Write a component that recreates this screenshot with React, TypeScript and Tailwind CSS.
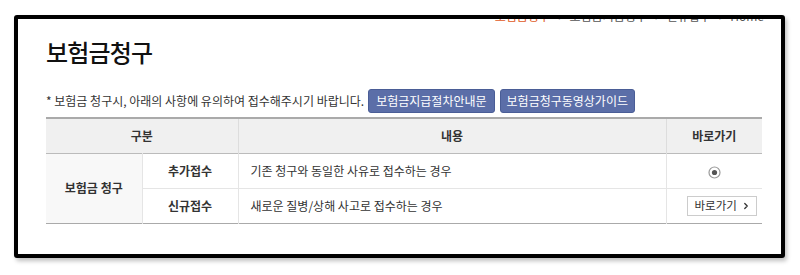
import { ChevronRight } from 'lucide-react';

const font = { fontFamily: '"Noto Sans CJK KR", "Noto Sans", sans-serif' };

const crumbs = [
  { label: '보험금청구', active: true },
  { label: '보험금지급청구', active: false },
  { label: '신규접수', active: false },
  { label: 'Home', active: false },
];

const RadioIcon = () => (
  <svg width="13" height="13" viewBox="0 0 13 13">
    <circle cx="6.5" cy="6.5" r="5.5" fill="#fff" stroke="#9a9a9a" strokeWidth="1.2" />
    <circle cx="6.5" cy="6.5" r="2.6" fill="#555" />
  </svg>
);

export default function App() {
  return (
    <div className="h-[275px] w-[800px] bg-white pt-[15px] pl-[14px]" style={font}>
      <div className="h-[243px] w-[771px] overflow-hidden rounded-[3px] border-4 border-black bg-white shadow-[2px_3px_4px_rgba(0,0,0,0.25)]">
        <div className="-mt-[9px] flex justify-end gap-[8px] pr-[17px] text-[12px] leading-[12px] text-[#555]">
          {crumbs.map((c, i) => (
            <span key={c.label} className={c.active ? 'text-[#e0581c]' : ''}>
              {i > 0 && <span className="mr-[8px] text-[#999]">›</span>}
              {c.label}
            </span>
          ))}
        </div>

        <div className="pl-[28px] pr-[18px]">
          <h1 className="mt-[14px] text-[24px] leading-[32px] font-medium tracking-[-0.8px] text-[#111]">
            보험금청구
          </h1>

          <div className="mt-[21px] flex items-center">
            <p className="text-[12px] text-[#333]">
              * 보험금 청구시, 아래의 사항에 유의하여 접수해주시기 바랍니다.
            </p>
            <button className="ml-[4px] h-[24px] rounded-[3px] border border-[#4a5d96] bg-[#5b6ea8] px-[7px] text-[12px] text-white">
              보험금지급절차안내문
            </button>
            <button className="ml-[5px] h-[24px] rounded-[3px] border border-[#4a5d96] bg-[#5b6ea8] px-[6px] text-[12px] text-white">
              보험금청구동영상가이드
            </button>
          </div>

          <table className="mt-[4px] w-[716px] border-collapse text-[12px] text-[#333]">
            <thead>
              <tr className="h-[35px] border-t-2 border-b border-t-[#aaa] border-b-[#bbb] bg-[#f0f0f0]">
                <th colSpan={2} className="w-[192px] border-r border-[#ddd] font-semibold">
                  구분
                </th>
                <th className="border-r border-[#ddd] font-semibold">내용</th>
                <th className="w-[96px] font-semibold">바로가기</th>
              </tr>
            </thead>
            <tbody>
              <tr className="h-[35px] border-b border-[#e5e5e5]">
                <td rowSpan={2} className="w-[96px] border-r border-[#e5e5e5] bg-[#f8f8f8] text-center font-semibold">
                  보험금 청구
                </td>
                <td className="w-[96px] border-r border-[#e5e5e5] text-center font-semibold">추가접수</td>
                <td className="border-r border-[#e5e5e5] pl-[12px]">기존 청구와 동일한 사유로 접수하는 경우</td>
                <td className="text-center">
                  <span className="inline-flex align-middle">
                    <RadioIcon />
                  </span>
                </td>
              </tr>
              <tr className="h-[35px] border-b border-[#aaa]">
                <td className="border-r border-[#e5e5e5] text-center font-semibold">신규접수</td>
                <td className="border-r border-[#e5e5e5] pl-[12px]">새로운 질병/상해 사고로 접수하는 경우</td>
                <td className="pl-[20px]">
                  <button className="inline-flex h-[20px] items-center border border-[#ccc] bg-white pr-[5px] pl-[7px] text-[11.5px] text-[#333]">
                    바로가기
                    <ChevronRight size={10} strokeWidth={3} className="ml-[4px]" />
                  </button>
                </td>
              </tr>
            </tbody>
          </table>
        </div>
      </div>
    </div>
  );
}
